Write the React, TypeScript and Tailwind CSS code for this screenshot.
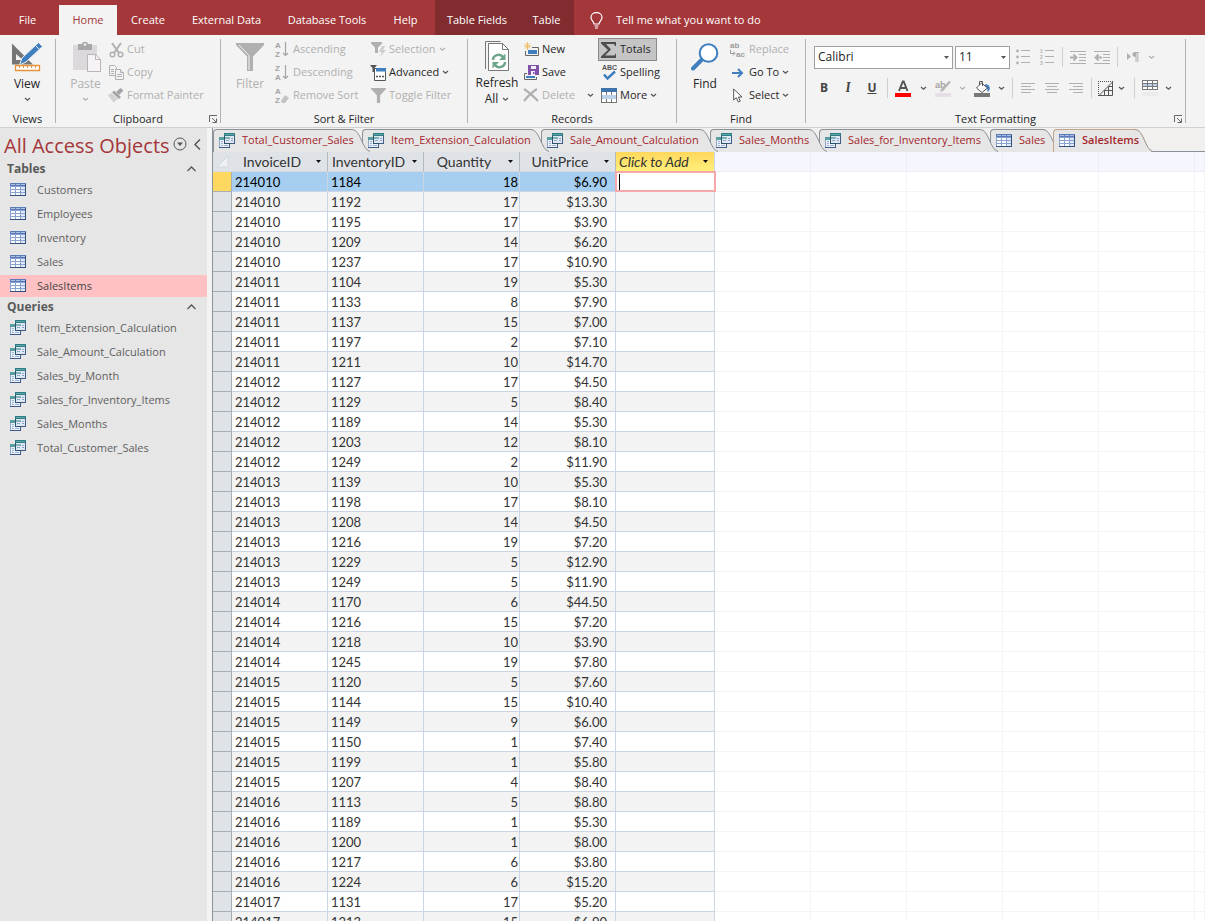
import type { ReactNode } from 'react'

const DISABLED = '#b1b0b0'

const UI_FONT = "font-['Open_Sans','Noto_Sans',sans-serif]"
const GRID_FONT = "font-['Lato','Noto_Sans',sans-serif]"
const ICON_FONT = "font-['Liberation_Sans',sans-serif]"

const ROWS: [string, string, number, string][] = [
  ['214010', '1184', 18, '$6.90'],
  ['214010', '1192', 17, '$13.30'],
  ['214010', '1195', 17, '$3.90'],
  ['214010', '1209', 14, '$6.20'],
  ['214010', '1237', 17, '$10.90'],
  ['214011', '1104', 19, '$5.30'],
  ['214011', '1133', 8, '$7.90'],
  ['214011', '1137', 15, '$7.00'],
  ['214011', '1197', 2, '$7.10'],
  ['214011', '1211', 10, '$14.70'],
  ['214012', '1127', 17, '$4.50'],
  ['214012', '1129', 5, '$8.40'],
  ['214012', '1189', 14, '$5.30'],
  ['214012', '1203', 12, '$8.10'],
  ['214012', '1249', 2, '$11.90'],
  ['214013', '1139', 10, '$5.30'],
  ['214013', '1198', 17, '$8.10'],
  ['214013', '1208', 14, '$4.50'],
  ['214013', '1216', 19, '$7.20'],
  ['214013', '1229', 5, '$12.90'],
  ['214013', '1249', 5, '$11.90'],
  ['214014', '1170', 6, '$44.50'],
  ['214014', '1216', 15, '$7.20'],
  ['214014', '1218', 10, '$3.90'],
  ['214014', '1245', 19, '$7.80'],
  ['214015', '1120', 5, '$7.60'],
  ['214015', '1144', 15, '$10.40'],
  ['214015', '1149', 9, '$6.00'],
  ['214015', '1150', 1, '$7.40'],
  ['214015', '1199', 1, '$5.80'],
  ['214015', '1207', 4, '$8.40'],
  ['214016', '1113', 5, '$8.80'],
  ['214016', '1189', 1, '$5.30'],
  ['214016', '1200', 1, '$8.00'],
  ['214016', '1217', 6, '$3.80'],
  ['214016', '1224', 6, '$15.20'],
  ['214017', '1131', 17, '$5.20'],
  ['214017', '1213', 15, '$6.90'],
]

const TABLES = ['Customers', 'Employees', 'Inventory', 'Sales', 'SalesItems']
const QUERIES = [
  'Item_Extension_Calculation',
  'Sale_Amount_Calculation',
  'Sales_by_Month',
  'Sales_for_Inventory_Items',
  'Sales_Months',
  'Total_Customer_Sales',
]

const DOC_TABS = [
  { name: 'Total_Customer_Sales', query: true, width: 'w-[139px]', z: 'z-[6]' },
  { name: 'Item_Extension_Calculation', query: true, width: 'w-[169px]', z: 'z-[5]' },
  { name: 'Sale_Amount_Calculation', query: true, width: 'w-[159px]', z: 'z-[4]' },
  { name: 'Sales_Months', query: true, width: 'w-[99px]', z: 'z-[3]' },
  { name: 'Sales_for_Inventory_Items', query: true, width: 'w-[161px]', z: 'z-[2]' },
  { name: 'Sales', query: false, width: 'w-[53px]', z: 'z-[1]' },
  { name: 'SalesItems', query: false, width: 'w-[82px]', z: 'z-[7]', active: true },
]

/* ---------- icons ---------- */

function Chevron({ off = false }: { off?: boolean }) {
  return (
    <svg width="7" height="5" viewBox="0 0 7 5" className="shrink-0" fill="none">
      <path d="M1 1l2.500 2.300L6 1" stroke={off ? DISABLED : '#555'} strokeWidth="1.200" />
    </svg>
  )
}

function TableIcon() {
  return (
    <svg width="16" height="13" viewBox="0 0 16 13" className="shrink-0" shapeRendering="crispEdges">
      <rect width="16" height="13" fill="#8aa2cf" />
      <rect width="16" height="3" fill="#5c7ab8" />
      <path d="M1 1h4v1H1zM6 1h4v1H6zM11 1h4v1h-4z" fill="#a9bfe6" />
      {[4, 7, 10].map(y =>
        [1, 6, 11].map(x => <rect key={`${x}-${y}`} x={x} y={y} width="4" height="2" fill={x === 11 ? '#dfe8f8' : '#fbfdff'} />),
      )}
      <path d="M15.500 1v12M0 12.500h16" stroke="#34507f" />
    </svg>
  )
}

function QueryIcon() {
  return (
    <svg width="16" height="15" viewBox="0 0 16 15" className="shrink-0" shapeRendering="crispEdges">
      <rect x="0" y="4" width="11" height="11" fill="#eaf0f8" />
      <rect x="0" y="4" width="11" height="3" fill="#5a9da3" />
      <path d="M.5 7v7" stroke="#8fa6c8" />
      <path d="M10.500 7v8M0 14.500h11" stroke="#3f5b86" />
      <path d="M2 8.500h2M2 10.500h2M2 12.500h2M5 12.500h4" stroke="#9db2d2" />
      <rect x="5" y="0" width="11" height="11" fill="#dfe8f2" />
      <rect x="5" y="0" width="11" height="3" fill="#2f7d84" />
      <rect x="6" y="1" width="9" height="1" fill="#5fa6aa" />
      <rect x="6" y="4" width="5" height="2" fill="#7fb4b8" />
      <path d="M5.500 3v7M5 10.500h6" stroke="#2c5468" />
      <path d="M15.500 3v8M11 10.500h5" stroke="#3f5b86" />
      <path d="M7 7.500h3M12 5.500h2M12 7.500h2" stroke="#8fa6c8" />
    </svg>
  )
}

function ViewIcon() {
  return (
    <svg width="32" height="32" viewBox="0 0 32 32">
      <path d="M1 2.500L22 23.500H1zM5 13v6h7z" fill="#767676" fillRule="evenodd" />
      <path d="M27.500 1.500l4 4L15 21l-6.500 3 2.500-7z" fill="#3f7fbf" stroke="#f3f3f3" />
      <path d="M25 5l3.500 3.500" stroke="#f3f3f3" />
      <path d="M4.500 24.500h24v5h-24z" fill="#fff" stroke="#e8923c" strokeWidth="1.300" />
      <path d="M8.500 25v2M12.500 25v2M16.500 25v2M20.500 25v2M24.500 25v2" stroke="#e8923c" />
    </svg>
  )
}

function PasteIcon() {
  return (
    <svg width="30" height="32" viewBox="0 0 30 32">
      <path d="M2 4h24v25H2z" fill="#dcd8db" />
      <path d="M7 3h4c0-3 6-3 6 0h4v6H7z" fill="#a9a7a8" />
      <circle cx="14" cy="3.500" r="1.300" fill="#f3f3f3" />
      <path d="M16.500 13.500h8l5 5v12h-13z" fill="#f6f2f6" stroke="#b9b6b8" />
      <path d="M24.500 13.500v5h5" fill="none" stroke="#b9b6b8" />
    </svg>
  )
}

function FilterIcon({ size }: { size: number }) {
  return (
    <svg width={size} height={size} viewBox="0 0 28 28">
      <path d="M0 0h28v2L17 13.500V28h-6V13.500L0 2z" fill={DISABLED} />
      {size > 20 && <path d="M3 2l10 10.500V27" stroke="#f3f3f3" fill="none" />}
    </svg>
  )
}

function CutIcon() {
  return (
    <svg width="15" height="16" viewBox="0 0 15 16" fill="none" stroke={DISABLED} strokeWidth="1.500">
      <path d="M3 1l7 10M12 1L5 11" strokeWidth="2" />
      <circle cx="3.500" cy="12.500" r="2.300" />
      <circle cx="11.500" cy="12.500" r="2.300" />
    </svg>
  )
}

function CopyIcon() {
  return (
    <svg width="15" height="15" viewBox="0 0 15 15" fill="#f3f3f3" stroke={DISABLED}>
      <path d="M.5.5h5l2 2v8h-7z" />
      <path d="M2 4.500h3M2 6.500h3M2 8.500h3" />
      <path d="M6.500 4.500h5l3 3v7h-8z" />
      <path d="M11.500 4.500v3h3M8 9.500h5M8 11.500h5" />
    </svg>
  )
}

function PainterIcon() {
  return (
    <svg width="16" height="15" viewBox="0 0 16 15">
      <path d="M12.500 0L15.500 2.500 11 7 8 4z" fill="#a5a4a4" />
      <path d="M6 2.500l7 6.500-2 2-7-6.500z" fill="#a5a4a4" />
      <path d="M3.500 5l6.500 6-4.500 3.500L0 7z" fill="#d4d1d3" />
    </svg>
  )
}

function SortIcon({ top, bottom, eraser = false }: { top: string; bottom: string; eraser?: boolean }) {
  return (
    <svg width="16" height="18" viewBox="0 0 16 18" fill="#a5a4a4" className={`overflow-visible ${ICON_FONT}`}>
      <text x="1" y="7" fontSize="8" fontWeight="700">{top}</text>
      <text x="1" y="16" fontSize="8" fontWeight="700">{bottom}</text>
      {eraser ? (
        <path d="M11 8l4 3-4 5H8l-1-2z" fill="#c4c2c3" />
      ) : (
        <path d="M11.500 1v13.500M9 12l2.500 2.500L14 12" fill="none" stroke="#a5a4a4" strokeWidth="1.200" />
      )}
    </svg>
  )
}

function SelectionIcon() {
  return (
    <svg width="15" height="15" viewBox="0 0 15 15" fill={DISABLED}>
      <path d="M0 0h11v1.500L7 5.500V11H4V5.500L0 1.500z" />
      <path d="M11 4h3l-2 4h3l-6 7 2-5H8z" fill="#d0cdcf" />
    </svg>
  )
}

function AdvancedIcon() {
  return (
    <svg width="16" height="16" viewBox="0 0 16 16">
      <path d="M4.500 3.500h11v12h-11z" fill="#fff" stroke="#555" />
      <path d="M6 3h10v3.500H6z" fill="#3f7fbf" />
      <path d="M6 11.500h2M9 11.500h2M12 11.500h2" stroke="#555" strokeWidth="1.500" />
      <path d="M0 0h7L4.500 3v4h-2V3z" fill="#555" />
    </svg>
  )
}

function RefreshIcon() {
  return (
    <svg width="25" height="31" viewBox="0 0 25 31" fill="none">
      <path d="M.5 28V.5h15" stroke="#777" />
      <path d="M3.500 2.500h14l6 6v21h-20z" fill="#fff" stroke="#777" />
      <path d="M17.500 2.500v6h6" stroke="#777" />
      <path d="M8 19c0-5 7-7 10-3" stroke="#6fa58a" strokeWidth="2.500" />
      <path d="M20.500 12.500V19H14z" fill="#6fa58a" />
      <path d="M20 21c0 5-7 7-10 3" stroke="#6fa58a" strokeWidth="2.500" />
      <path d="M7.500 27.500V21H14z" fill="#6fa58a" />
    </svg>
  )
}

function NewIcon() {
  return (
    <svg width="15" height="15" viewBox="0 0 15 15" fill="none">
      <path d="M3.500 0v8M0 4h7.500M1 1.300l5 5.200M6 1.300L1 6.500" stroke="#efbe62" />
      <path d="M8 5.500h6.500v8H1.500V9" stroke="#666" />
      <path d="M4 8h9v4H4z" fill="#3f7fbf" />
    </svg>
  )
}

function SaveIcon() {
  return (
    <svg width="16" height="16" viewBox="0 0 16 16" fill="none">
      <path d="M4 8.500H1.500v6h12V12" stroke="#666" />
      <path d="M3 11h9v2H3z" fill="#3f7fbf" />
      <path d="M5 0h11v10H5z" fill="#8153a8" />
      <path d="M8 1h5v3H8zM8 6h4v4H8z" fill="#f6effb" />
      <path d="M10 7h1.500v2H10z" fill="#8153a8" />
    </svg>
  )
}

function DeleteIcon() {
  return (
    <svg width="16" height="15" viewBox="0 0 16 15" stroke={DISABLED} strokeWidth="2.200" fill="none">
      <path d="M1 1c5 3 9 7 14 12M14 1C9 4 5 8 1 13" />
    </svg>
  )
}

function SigmaIcon() {
  return (
    <svg width="16" height="16" viewBox="0 0 16 16">
      <path d="M0 0h15v4h-1l-1-2H5l5 5.500L4 13.500h9.500L15 11v5H0v-1.500L7 8 0 1.500z" fill="#4d4d4d" />
    </svg>
  )
}

function SpellingIcon() {
  return (
    <svg width="16" height="17" viewBox="0 0 16 17" className={`overflow-visible ${ICON_FONT}`}>
      <text x="1" y="6" fontSize="7" fontWeight="700" fill="#555">ABC</text>
      <path d="M3 10.500l3.500 4L14 7.500" fill="none" stroke="#3f7fbf" strokeWidth="2.500" />
    </svg>
  )
}

function GridIcon() {
  return (
    <svg width="16" height="15" viewBox="0 0 16 15" shapeRendering="crispEdges">
      <rect width="16" height="15" fill="#777" />
      <rect width="16" height="4" fill="#3f74ad" />
      {[1, 6, 11].map(x => (
        <g key={x}>
          <rect x={x} y="4" width="4" height="3" fill="#fff" />
          <rect x={x} y="11" width="4" height="3" fill="#fff" />
        </g>
      ))}
      <rect x="1" y="7" width="14" height="4" fill="#bcd2ea" />
    </svg>
  )
}

function FindIcon() {
  return (
    <svg width="28" height="28" viewBox="0 0 28 28" fill="none" stroke="#3f7fbf">
      <path d="M10.500 17L2 25.500" strokeWidth="4" strokeLinecap="round" />
      <circle cx="17.500" cy="10" r="8.800" fill="#fff" strokeWidth="2" />
    </svg>
  )
}

function ReplaceIcon() {
  return (
    <svg width="16" height="18" viewBox="0 0 16 18" fill="#9b9b9b" className={`overflow-visible ${ICON_FONT}`}>
      <text x="0" y="7" fontSize="8" fontWeight="700">ab</text>
      <text x="6" y="16" fontSize="8" fontWeight="700">ac</text>
      <path d="M.5 9v3.500h4M3 10.500l2 2-2 2" fill="none" stroke="#9b9b9b" />
    </svg>
  )
}

function GoToIcon() {
  return (
    <svg width="12" height="10" viewBox="0 0 12 10" fill="none" stroke="#3f7fbf" strokeWidth="2">
      <path d="M0 5h10M6 1l4 4-4 4" />
    </svg>
  )
}

function PointerIcon() {
  return (
    <svg width="10" height="15" viewBox="0 0 10 15">
      <path d="M.7 1v11l2.600-2.300L5.300 14l2-.9-1.900-4.100H9z" fill="#fff" stroke="#555" />
    </svg>
  )
}

function ListIcon({ numbered = false }: { numbered?: boolean }) {
  return (
    <svg width="14" height="16" viewBox="0 0 14 16" fill={DISABLED} className={`overflow-visible ${ICON_FONT}`}>
      {[2, 8, 14].map((y, i) => (
        <g key={y}>
          {numbered ? (
            <text x="0" y={y + 2} fontSize="5" fontWeight="700">{i + 1}</text>
          ) : (
            <circle cx="1.500" cy={y} r="1.400" />
          )}
          <rect x="5" y={y - 1} width="9" height="1" />
        </g>
      ))}
    </svg>
  )
}

function IndentIcon({ left = false }: { left?: boolean }) {
  return (
    <svg width="16" height="13" viewBox="0 0 16 13" fill="none" stroke={DISABLED}>
      <path d="M0 .5h16M9 3.500h7M9 6.500h7M9 9.500h7M0 12.500h16" />
      <path d={left ? 'M8 6.500H2M4.500 3.500l-3 3 3 3' : 'M0 6.500h6M3.500 3.500l3 3-3 3'} strokeWidth="1.800" />
    </svg>
  )
}

function AlignIcon({ side }: { side: 'left' | 'center' | 'right' }) {
  const x = side === 'left' ? 0 : side === 'center' ? 2 : 4
  return (
    <svg width="14" height="12" viewBox="0 0 14 12" fill={DISABLED} shapeRendering="crispEdges">
      {[0, 3, 6, 9].map((y, i) => (
        <rect key={y} x={i % 2 ? x : 0} y={y + 1} width={i % 2 ? 10 : 14} height="1" />
      ))}
    </svg>
  )
}

function ParagraphIcon() {
  return (
    <svg width="12" height="10" viewBox="0 0 12 10" fill={DISABLED}>
      <path d="M0 1l4 3.500L0 8z" />
      <path d="M8 0h4v1h-.7v9h-1V1h-.8v9h-1V5C4.500 5 4.500 0 8 0z" />
    </svg>
  )
}

function FontColorIcon() {
  return (
    <svg width="16" height="17" viewBox="0 0 16 17">
      <path d="M4 11L7.800 1.500h.9L12.500 11M5.500 8h5.500" stroke="#555" strokeWidth="1.900" fill="none" />
      <rect y="13" width="16" height="4" fill="#f00" />
    </svg>
  )
}

function HighlightIcon() {
  return (
    <svg width="16" height="17" viewBox="0 0 16 17" className={`overflow-visible ${ICON_FONT}`}>
      <text x="0" y="8" fontSize="9" fontWeight="700" fill="#a5a4a4">ab</text>
      <path d="M16 2L8 11l-3 1 1-3 8-8z" fill="#b8b6b7" />
      <rect y="13" width="16" height="4" fill="#e6e0e6" />
    </svg>
  )
}

function FillIcon() {
  return (
    <svg width="16" height="17" viewBox="0 0 16 17" fill="none">
      <path d="M12 4c4 1 5 5 2 8-1-2 0-4-4-6z" fill="#3f7fbf" />
      <path d="M7.500 3l6 5-5.500 4.500L2.500 8z" fill="#fff" stroke="#555" />
      <path d="M5.500 5V1.500h3V6" stroke="#555" />
      <rect y="13" width="16" height="4" fill="#777" />
    </svg>
  )
}

function GridlinesIcon() {
  return (
    <svg width="15" height="15" viewBox="0 0 15 15" fill="none" stroke="#555">
      <path d="M0 .5h15M.5 0v15" strokeDasharray="1 1" />
      <path d="M1 14.500L14.500 1v13.500zM6.500 14V9.500h8M10.500 14V5.500h4" />
    </svg>
  )
}

function AltRowIcon() {
  return (
    <svg width="16" height="16" viewBox="0 0 16 16" shapeRendering="crispEdges">
      <rect width="16" height="10" fill="#777" />
      {[1, 6, 11].map(x => (
        <g key={x}>
          <rect x={x} y="1" width="4" height="2" fill="#fff" />
          <rect x={x} y="4" width="4" height="2" fill="#bcd2ea" />
          <rect x={x} y="7" width="4" height="2" fill="#fff" />
        </g>
      ))}
      <rect y="12" width="16" height="4" fill="#ebebeb" />
    </svg>
  )
}

function LauncherIcon() {
  return (
    <svg width="8" height="8" viewBox="0 0 8 8" fill="none" stroke="#666">
      <path d="M.5 7V.5H8M3 3l4 4M7.500 3.500v4h-4" />
    </svg>
  )
}

function BulbIcon() {
  return (
    <svg width="13" height="17" viewBox="0 0 13 17" fill="none" stroke="#fff" strokeWidth="1.200">
      <path d="M4 12c0-2.500-3-3.500-3-6.500C1 2.500 3.500.7 6.500.7S12 2.500 12 5.500c0 3-3 4-3 6.500zM4.500 14h4M5 16h3" />
    </svg>
  )
}

/* ---------- ribbon ---------- */

function Group({ label, width, launcher, children }: { label: string; width: string; launcher?: boolean; children: ReactNode }) {
  return (
    <section className={`${width} flex shrink-0 pt-[3px]`} aria-label={label}>
      <div className="flex min-w-0 flex-1 flex-col">
        <div className="flex h-[69px]">{children}</div>
        <div className="relative mt-1 h-4 text-center leading-4 text-[#262626]">
          {label}
          {launcher && (
            <button className="absolute right-[3px] top-1" aria-label={`${label} settings`}>
              <LauncherIcon />
            </button>
          )}
        </div>
      </div>
      <div className="mb-1 mt-px w-px bg-[#b4b4b4]" />
    </section>
  )
}

function BigButton({ icon, label, more, off, width, children }: { icon: ReactNode; label: string; more?: boolean; off?: boolean; width: string; children?: ReactNode }) {
  return (
    <button className={`${width} flex shrink-0 flex-col items-center text-[12px] ${off ? 'text-[#b1b0b0]' : 'text-[#262626]'}`} disabled={off}>
      <span className="grid h-[38px] place-items-center">{icon}</span>
      <span className="h-4 leading-4">{label}</span>
      {children}
      {more && (
        <span className="mt-[3px] grid h-2 place-items-center">
          <Chevron off={off} />
        </span>
      )}
    </button>
  )
}

function SmallButton({ icon, label, more, off, active }: { icon: ReactNode; label: string; more?: boolean; off?: boolean; active?: boolean }) {
  return (
    <button
      className={`flex h-[23px] items-center gap-[3px] whitespace-nowrap border pl-[2px] pr-[5px] ${off ? 'text-[#b1b0b0]' : 'text-[#262626]'} ${active ? 'border-[#8a8a8a] bg-[#c5c5c5]' : 'border-transparent'}`}
      disabled={off}
    >
      <span className="grid w-4 shrink-0 place-items-center">{icon}</span>
      {label}
      {more && <Chevron off={off} />}
    </button>
  )
}

function Tool({ label, children, width = 'w-6' }: { label: string; children: ReactNode; width?: string }) {
  return (
    <button className={`${width} grid h-6 shrink-0 place-items-center text-[12px] text-[#444]`} aria-label={label}>
      {children}
    </button>
  )
}

function Divider() {
  return <div className="mx-[3px] h-5 w-px shrink-0 bg-[#cfcfcf]" />
}

function Dropdown({ label, value, width }: { label: string; value: string; width: string }) {
  return (
    <label className={`${width} relative block h-[23px] shrink-0`}>
      <select aria-label={label} defaultValue={value} className="h-full w-full appearance-none border border-[#a0a0a0] bg-white px-[3px] text-[12px] text-[#262626]">
        <option>{value}</option>
      </select>
      <svg width="5" height="3" viewBox="0 0 5 3" className="pointer-events-none absolute right-1 top-[10px]">
        <path d="M0 0h5L2.500 3z" fill="#555" />
      </svg>
    </label>
  )
}

function Ribbon() {
  return (
    <div className="flex h-[93px] shrink-0 border-b border-[#d0d0d0] bg-[#f3f3f3] text-[11px]">
      <Group label="Views" width="w-[56px]">
        <BigButton icon={<ViewIcon />} label="View" width="w-[54px]" more />
      </Group>

      <Group label="Clipboard" width="w-[165px]" launcher>
        <BigButton icon={<PasteIcon />} label="Paste" width="w-[51px] ml-1" more off />
        <div className="-ml-[6px]">
          <SmallButton icon={<CutIcon />} label="Cut" off />
          <SmallButton icon={<CopyIcon />} label="Copy" off />
          <SmallButton icon={<PainterIcon />} label="Format Painter" off />
        </div>
      </Group>

      <Group label="Sort & Filter" width="w-[247px]">
        <BigButton icon={<FilterIcon size={28} />} label="Filter" width="w-[50px] ml-1" off />
        <div className="-ml-1 w-24">
          <SmallButton icon={<SortIcon top="A" bottom="Z" />} label="Ascending" off />
          <SmallButton icon={<SortIcon top="Z" bottom="A" />} label="Descending" off />
          <SmallButton icon={<SortIcon top="A" bottom="Z" eraser />} label="Remove Sort" off />
        </div>
        <div>
          <SmallButton icon={<SelectionIcon />} label="Selection" more off />
          <SmallButton icon={<AdvancedIcon />} label="Advanced" more />
          <SmallButton icon={<FilterIcon size={15} />} label="Toggle Filter" off />
        </div>
      </Group>

      <Group label="Records" width="w-[209px]">
        <BigButton icon={<RefreshIcon />} label="Refresh" width="w-[50px] ml-1">
          <span className="flex h-4 items-center gap-1 leading-4">
            All <Chevron />
          </span>
        </BigButton>
        <div className="-ml-[2px] w-[78px]">
          <SmallButton icon={<NewIcon />} label="New" />
          <SmallButton icon={<SaveIcon />} label="Save" />
          <div className="flex items-center justify-between">
            <SmallButton icon={<DeleteIcon />} label="Delete" off />
            <button className="px-[6px]" aria-label="Delete options">
              <Chevron />
            </button>
          </div>
        </div>
        <div>
          <SmallButton icon={<SigmaIcon />} label="Totals" active />
          <SmallButton icon={<SpellingIcon />} label="Spelling" />
          <SmallButton icon={<GridIcon />} label="More" more />
        </div>
      </Group>

      <Group label="Find" width="w-[129px]">
        <BigButton icon={<FindIcon />} label="Find" width="w-[48px] ml-1" />
        <div className="-ml-[2px]">
          <SmallButton icon={<ReplaceIcon />} label="Replace" off />
          <SmallButton icon={<GoToIcon />} label="Go To" more />
          <SmallButton icon={<PointerIcon />} label="Select" more />
        </div>
      </Group>

      <Group label="Text Formatting" width="w-[380px]" launcher>
        <div className="flex flex-col gap-[7px] pl-2 pt-[7px]">
          <div className="flex items-center">
            <Dropdown label="Font" value="Calibri" width="w-[139px]" />
            <Dropdown label="Font size" value="11" width="w-[55px] ml-[2px]" />
            <div className="ml-px flex items-center">
              <Tool label="Bullets"><ListIcon /></Tool>
              <Tool label="Numbering"><ListIcon numbered /></Tool>
              <Divider />
              <Tool label="Increase indent"><IndentIcon /></Tool>
              <Tool label="Decrease indent"><IndentIcon left /></Tool>
              <Divider />
              <Tool label="Text direction"><ParagraphIcon /></Tool>
              <Tool label="Text direction options" width="w-3"><Chevron off /></Tool>
            </div>
          </div>
          <div className="-ml-[2px] flex items-center">
            <Tool label="Bold"><b>B</b></Tool>
            <Tool label="Italic"><i className="font-serif text-[13px] font-bold">I</i></Tool>
            <Tool label="Underline"><b className="underline">U</b></Tool>
            <Divider />
            <Tool label="Font color"><FontColorIcon /></Tool>
            <Tool label="Font color options" width="w-4"><Chevron /></Tool>
            <Tool label="Highlight" width="w-[23px]"><HighlightIcon /></Tool>
            <Tool label="Highlight options" width="w-4"><Chevron off /></Tool>
            <Tool label="Background color" width="w-[23px]"><FillIcon /></Tool>
            <Tool label="Background color options" width="w-4"><Chevron /></Tool>
            <Divider />
            <Tool label="Align left"><AlignIcon side="left" /></Tool>
            <Tool label="Center"><AlignIcon side="center" /></Tool>
            <Tool label="Align right"><AlignIcon side="right" /></Tool>
            <Divider />
            <Tool label="Gridlines" width="w-5"><GridlinesIcon /></Tool>
            <Tool label="Gridlines options" width="w-3"><Chevron /></Tool>
            <div className="ml-1"><Divider /></div>
            <Tool label="Alternate row color"><AltRowIcon /></Tool>
            <Tool label="Row color options" width="w-3"><Chevron /></Tool>
          </div>
        </div>
      </Group>
    </div>
  )
}

function MenuTab({ label, width }: { label: string; width: string }) {
  return <button className={`${width} h-full shrink-0 whitespace-nowrap pt-[5px] text-center`}>{label}</button>
}

function MenuBar() {
  return (
    <nav className="flex h-[35px] shrink-0 bg-[#a4373a] text-[11px] text-white">
      <button className="w-[55px] shrink-0 pt-[5px]">File</button>
      <button className="ml-1 mt-[5px] w-[58px] shrink-0 bg-[#f3f3f3] text-[#a4373a]">Home</button>
      <MenuTab label="Create" width="w-[62px]" />
      <MenuTab label="External Data" width="w-[95px]" />
      <MenuTab label="Database Tools" width="w-[106px]" />
      <MenuTab label="Help" width="w-[51px]" />
      <div className="ml-1 flex bg-[#812c2f]">
        <MenuTab label="Table Fields" width="w-[84px]" />
        <MenuTab label="Table" width="w-[55px]" />
      </div>
      <button className="ml-4 flex items-center gap-[13px] pt-[5px]">
        <BulbIcon />
        Tell me what you want to do
      </button>
    </nav>
  )
}

/* ---------- navigation pane ---------- */

function NavSection({ title, items, query }: { title: string; items: string[]; query?: boolean }) {
  return (
    <section>
      <button className="flex h-[18px] w-full items-center justify-between pl-[7px] pr-[11px] font-bold leading-[18px] text-[#5a5a5a]">
        {title}
        <svg width="9" height="6" viewBox="0 0 9 6" fill="none">
          <path d="M.5 5l4-4 4 4" stroke="#555" strokeWidth="1.300" />
        </svg>
      </button>
      <ul>
        {items.map(name => (
          <li key={name} className="h-6 py-px">
            <button className={`flex h-[22px] w-full items-center pl-[10px] text-[11px] ${name === 'SalesItems' ? 'bg-[#ffc1c3] text-[#444]' : 'text-[#5f5f5f]'}`}>
              <span className="mr-[11px] w-4 shrink-0 pb-[2px]">{query ? <QueryIcon /> : <TableIcon />}</span>
              {name}
            </button>
          </li>
        ))}
      </ul>
    </section>
  )
}

function NavPane() {
  return (
    <aside className="w-[207px] shrink-0 bg-[#e6e6e6] text-[12px]">
      <div className="flex h-8 items-center pl-1">
        <h1 className="whitespace-nowrap pt-1 text-[20px] leading-8 text-[#a4373a]">All Access Objects</h1>
        <button aria-label="Object list options" className="ml-[3px] shrink-0">
          <svg width="14" height="14" viewBox="0 0 14 14" fill="none">
            <circle cx="7" cy="7" r="6" stroke="#555" />
            <path d="M4 5.500h6L7 9z" fill="#555" />
          </svg>
        </button>
        <button aria-label="Collapse pane" className="ml-[7px] shrink-0">
          <svg width="7" height="11" viewBox="0 0 7 11" fill="none">
            <path d="M6 .5l-5 5 5 5" stroke="#555" strokeWidth="1.500" />
          </svg>
        </button>
      </div>
      <NavSection title="Tables" items={TABLES} />
      <NavSection title="Queries" items={QUERIES} query />
    </aside>
  )
}

/* ---------- document tabs ---------- */

function DocTabs() {
  return (
    <div className="flex h-6 shrink-0 border-b border-[#8b9199] bg-[#f1f0ef] pt-px">
      {DOC_TABS.map(t => (
        <button
          key={t.name}
          className={`relative -mr-2 flex h-[23px] shrink-0 ${t.z} ${t.active ? 'font-semibold' : ''} text-[11px] text-[#a4262c]`}
        >
          <span className={`${t.width} flex h-full items-center rounded-tl border-l border-t bg-[#e6e6e6] pb-[2px] pl-[5px] ${t.active ? 'border-[#c2a48c]' : 'border-[#8b9199]'}`}>
            <span className="w-4 shrink-0">{t.query ? <QueryIcon /> : <TableIcon />}</span>
            <span className="relative z-10 ml-[7px] whitespace-nowrap">{t.name}</span>
          </span>
          <svg width="18" height="23" viewBox="0 0 18 23" className="shrink-0">
            <path d="M0 0C9 0 10 22 18 23H0z" fill="#e6e6e6" />
            <path d="M0 .5C9 .5 10 21 18 22.500" fill="none" stroke={t.active ? '#a0917f' : '#8b9199'} />
          </svg>
        </button>
      ))}
    </div>
  )
}

/* ---------- datasheet ---------- */

function HeaderCell({ label, align, adding }: { label: string; align: string; adding?: boolean }) {
  return (
    <th className={`border-b border-r p-0 font-normal ${adding ? 'border-b-[#e5cf6a] border-r-[#ccd5e5] bg-gradient-to-b from-[#ffd75c] to-[#fff07a] italic' : 'border-b-[#d5dae2] border-r-[#b4b8c0] bg-[#dfe2e7]'}`}>
      <div className="flex items-center pr-[6px]">
        <span className={`min-w-0 flex-1 whitespace-nowrap ${align}`}>{label}</span>
        <svg width="5" height="3" viewBox="0 0 5 3" className="shrink-0">
          <path d="M0 0h5L2.500 3z" fill="#111" />
        </svg>
      </div>
    </th>
  )
}

function BlankCells({ className }: { className: string }) {
  return (
    <>
      {[0, 1, 2, 3, 4, 5].map(i => (
        <td key={i} className={`border-b border-r p-0 ${className}`} />
      ))}
    </>
  )
}

function Datasheet() {
  const cell = 'border-b border-r border-[#ccd5e5] pt-px'
  return (
    <div className={`min-h-0 flex-1 overflow-hidden bg-white text-[#333] ${GRID_FONT}`}>
      <table className="w-full table-fixed border-separate border-spacing-0">
        <colgroup>
          <col className="w-[19px]" />
          <col className="w-24" />
          <col className="w-24" />
          <col className="w-24" />
          <col className="w-24" />
          <col className="w-[99px]" />
          <col className="w-24" />
          <col className="w-24" />
          <col className="w-24" />
          <col className="w-24" />
          <col className="w-24" />
          <col />
        </colgroup>
        <thead className="text-[14px] leading-[19px]">
          <tr className="h-5">
            <td className="border-b border-[#d5dae2] bg-[#dfe2e7] p-0">
              <svg width="13" height="13" viewBox="0 0 13 13" className="ml-[3px]">
                <path d="M12 1v11H1z" fill="#eef0f4" stroke="#d3d8e2" />
              </svg>
            </td>
            <HeaderCell label="InvoiceID" align="pl-[11px] text-left" />
            <HeaderCell label="InventoryID" align="pl-1 text-left" />
            <HeaderCell label="Quantity" align="pr-1 text-center" />
            <HeaderCell label="UnitPrice" align="pr-1 text-center" />
            <HeaderCell label="Click to Add" align="pl-[3px] text-left" adding />
            <BlankCells className="border-[#eceef6] bg-[#f6f7fe]" />
          </tr>
        </thead>
        <tbody className="text-[13px] leading-[18px]">
          {ROWS.map(([invoice, inventory, qty, price], i) => {
            const current = i === 0
            const bg = current ? 'bg-[#a5cef1] text-black' : i % 2 ? 'bg-[#f3f3f3]' : 'bg-white'
            return (
              <tr key={i} className="h-5">
                <td className={`border-b border-r border-[#a9adb5] p-0 ${current ? 'bg-[#ffd95f]' : 'bg-[#dfe2e7]'}`} />
                <td className={`${cell} ${bg} pl-[3px]`}>{invoice}</td>
                <td className={`${cell} ${bg} pl-[3px]`}>{inventory}</td>
                <td className={`${cell} ${bg} pr-px text-right`}>{qty}</td>
                <td className={`${cell} ${bg} pr-2 text-right`}>{price}</td>
                {current ? (
                  <td className={`${cell} relative`}>
                    <input aria-label="Click to Add" className="absolute -left-px -top-px h-[21px] w-[101px] border-2 border-[#f6a8ab] bg-white px-1 outline-none" />
                    <span className="absolute left-[3px] top-[2px] h-4 w-px bg-black" />
                  </td>
                ) : (
                  <td className={`${cell} ${bg}`} />
                )}
                <BlankCells className="border-[#f3f3f8]" />
              </tr>
            )
          })}
        </tbody>
      </table>
    </div>
  )
}

export default function App() {
  return (
    <div className={`flex h-screen flex-col overflow-hidden bg-[#f3f3f3] ${UI_FONT}`}>
      <MenuBar />
      <Ribbon />
      <div className="flex min-h-0 flex-1">
        <NavPane />
        <main className="ml-[5px] flex min-w-0 flex-1 flex-col border-l border-[#8b9199]">
          <DocTabs />
          <Datasheet />
        </main>
      </div>
    </div>
  )
}
